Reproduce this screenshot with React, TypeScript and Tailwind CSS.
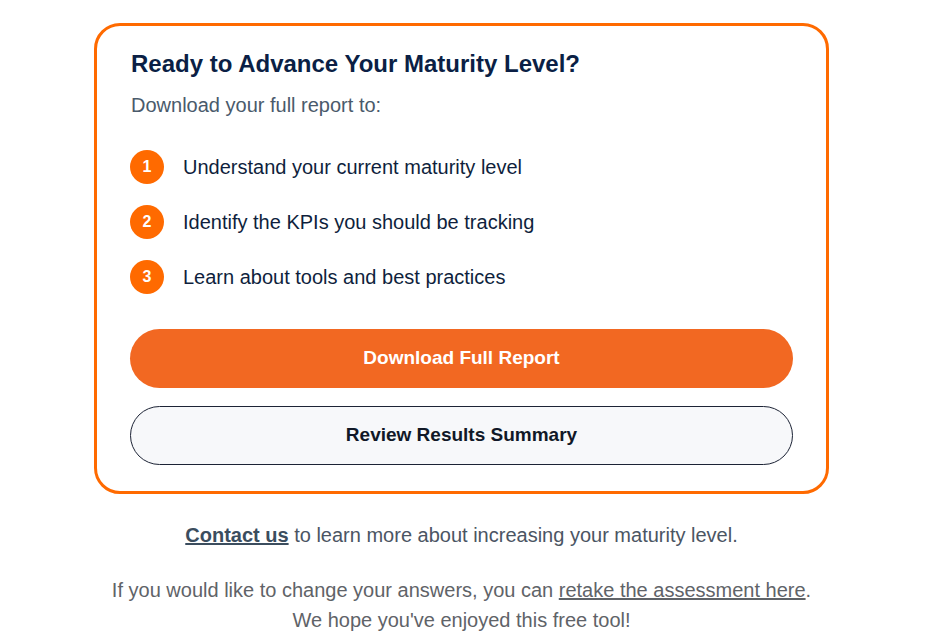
const STEPS = [
  "Understand your current maturity level",
  "Identify the KPIs you should be tracking",
  "Learn about tools and best practices",
];

export default function App() {
  return (
    <div className="min-h-screen bg-white font-['Liberation_Sans',Arial,sans-serif]">
      <div className="w-[735px] ml-[94px] pt-[23px]">
        <div className="border-[3px] border-[#ff6a00] rounded-[26px] px-[33px] pt-[23px] pb-[26px]">
          <h2 className="text-[24px] leading-[30px] font-bold text-[#0b1f45] pl-px">
            Ready to Advance Your Maturity Level?
          </h2>
          <p className="mt-[12px] text-[20px] leading-[28px] text-[#4a5a6b] pl-px">
            Download your full report to:
          </p>
          <ul className="mt-[31px] flex flex-col gap-[21px]">
            {STEPS.map((step, i) => (
              <li key={step} className="flex items-center gap-[19px]">
                <span className="w-[34px] h-[34px] rounded-full bg-[#ff6a00] text-white font-bold text-[16px] flex items-center justify-center shrink-0">
                  {i + 1}
                </span>
                <span className="text-[20px] leading-[28px] text-[#0f1f3d]">{step}</span>
              </li>
            ))}
          </ul>
          <div className="mt-[35px] flex flex-col gap-[18px]">
            <button className="h-[59px] w-full rounded-full bg-[#f26822] text-white text-[19px] font-bold">
              Download Full Report
            </button>
            <button className="h-[59px] w-full rounded-full bg-[#f7f8fa] border border-[#1c2335] text-[#111827] text-[19px] font-bold">
              Review Results Summary
            </button>
          </div>
        </div>
        <div className="text-center text-[20px] text-[#5f6368]">
          <p className="mt-[26px] leading-[30px] text-[#4b5563]">
            <a href="#" className="font-bold underline text-[#3b4d5e]">Contact us</a> to learn more about increasing your maturity level.
          </p>
          <p className="mt-[25px] leading-[30px]">
            If you would like to change your answers, you can <a href="#" className="underline">retake the assessment here</a>.
            <br />
            We hope you've enjoyed this free tool!
          </p>
        </div>
      </div>
    </div>
  );
}
